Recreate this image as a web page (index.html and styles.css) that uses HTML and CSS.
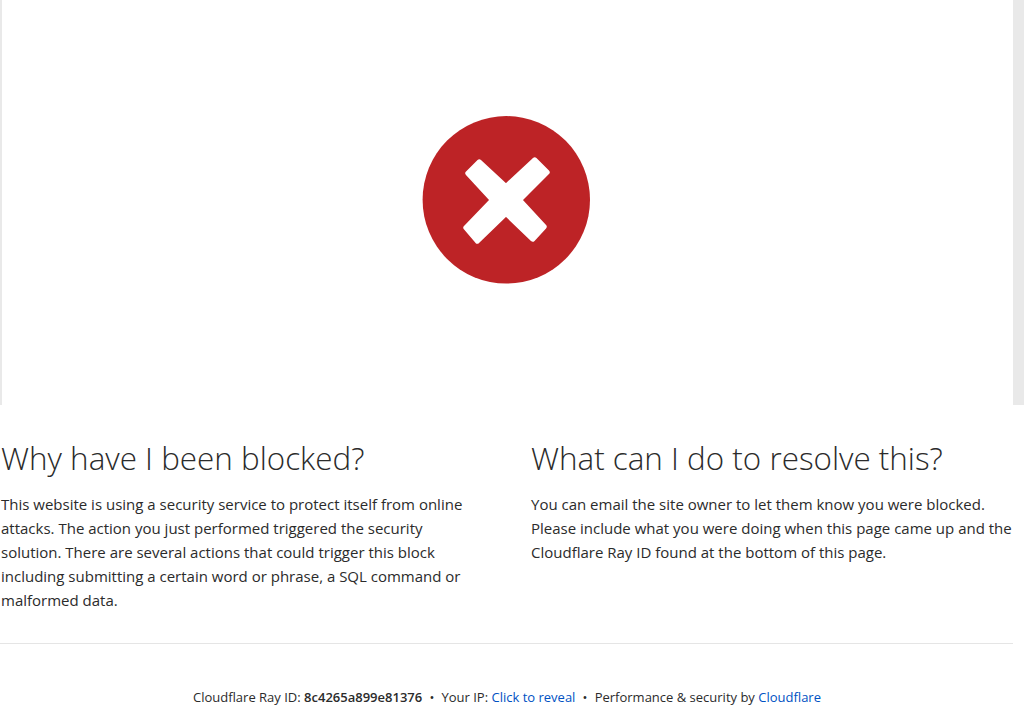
FILE: index.html
```html
<!DOCTYPE html>
<html lang="en">

<head>
    <meta charset="UTF-8">
    <meta name="viewport" content="width=device-width, initial-scale=1.0">
    <title>Attention Required! | Cloudflare</title>
    <link rel="stylesheet" href="styles.css">
</head>

<body>

    <!-- Blocked banner -->
    <div class="banner">
        <div class="banner-inner">
            <svg class="block-icon" viewBox="0 0 168 168" width="168" height="168">
                <circle cx="84.3" cy="83.8" r="83.7" fill="#bd2326"></circle>
                <path d="M84 70.5 L112.7 43.8 L125.2 56.3 L97.5 84 L122.2 110.7 L110.7 123.2 L84 97.5 L55.3 125.2 L43.8 111.7 L70.5 84 L45.8 57.3 L57.3 45.8 Z" fill="#fff" stroke="#fff" stroke-width="5" stroke-linejoin="round"></path>
            </svg>
        </div>
    </div>

    <div class="content">
        <div class="columns">
            <div class="column">
                <h2>Why have I been blocked?</h2>
                <p>This website is using a security service to protect itself from online attacks. The action you just performed triggered the security solution. There are several actions that could trigger this block including submitting a certain word or phrase, a SQL command or malformed data.</p>
            </div>
            <div class="column">
                <h2>What can I do to resolve this?</h2>
                <p>You can email the site owner to let them know you were blocked. Please include what you were doing when this page came up and the Cloudflare Ray ID found at the bottom of this page.</p>
            </div>
        </div>

        <div class="footer">
            <span>Cloudflare Ray ID: <strong>8c4265a899e81376</strong></span>
            <span class="sep">•</span>
            <span>Your IP: <a href="#">Click to reveal</a></span>
            <span class="sep">•</span>
            <span>Performance &amp; security by <a href="#">Cloudflare</a></span>
        </div>
    </div>

</body>

</html>
```

FILE: styles.css
```css
body {
    font-family: "Open Sans", "Noto Sans", Arial, sans-serif;
    margin: 0;
    padding: 0;
    color: #2b2b2b;
    background-color: #fff;
    overflow: hidden;
}

.banner {
    background-color: #e9e9e9;
    height: 405px;
    padding: 0 11px 0 2px;
}

.banner-inner {
    background-color: #fff;
    height: 100%;
    display: flex;
    justify-content: center;
    padding-top: 116px;
    padding-right: 3px;
    box-sizing: border-box;
}

.block-icon {
    display: block;
}

.content {
    width: 1013px;
}

.columns {
    display: grid;
    grid-template-columns: 482px 482px;
    column-gap: 48px;
    padding-top: 32px;
    padding-bottom: 31px;
    border-bottom: 1px solid #e5e5e5;
}

h2 {
    font-size: 31.4px;
    font-weight: 300;
    line-height: 42px;
    margin: 0 0 13px 1px;
}

p {
    font-size: 15px;
    line-height: 24px;
    margin: 0 0 0 1px;
}

.footer {
    display: flex;
    justify-content: center;
    gap: 7.2px;
    font-size: 13px;
    line-height: 20px;
    margin-top: 43px;
    padding-left: 1px;
}

.footer strong {
    font-weight: 600;
}

.footer a {
    color: #0051c3;
    text-decoration: none;
}
```
